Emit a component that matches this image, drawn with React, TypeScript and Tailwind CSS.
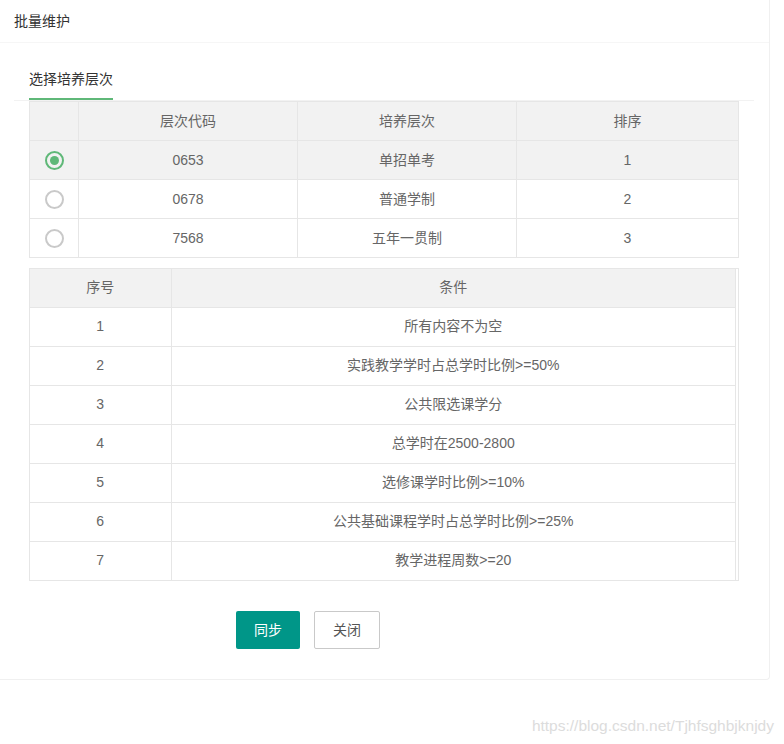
import React from 'react';

const levels = [
    { code: '0653', name: '单招单考', order: 1 },
    { code: '0678', name: '普通学制', order: 2 },
    { code: '7568', name: '五年一贯制', order: 3 },
];

const rules = [
    '所有内容不为空',
    '实践教学学时占总学时比例>=50%',
    '公共限选课学分',
    '总学时在2500-2800',
    '选修课学时比例>=10%',
    '公共基础课程学时占总学时比例>=25%',
    '教学进程周数>=20',
];

const Radio: React.FC<{ checked: boolean }> = ({ checked }) => (
    <span
        className={`mx-auto flex h-[19px] w-[19px] items-center justify-center rounded-full border-2 ${
            checked ? 'border-[#5fb878]' : 'border-[#c9c9c9]'
        }`}
    >
        {checked && <span className="h-[9px] w-[9px] rounded-full bg-[#5fb878]" />}
    </span>
);

export default function App() {
    return (
        <div
            className="min-h-[744px] bg-white text-[14px] text-[#666]"
            style={{ fontFamily: '"Liberation Sans", "Noto Sans CJK SC", sans-serif' }}
        >
            <div className="w-[770px] rounded-br-sm border-r border-b border-[#f0f0f0]">
                <div className="flex h-[43px] items-center border-b border-[#f6f6f6] px-[14px] text-[#333]">
                    批量维护
                </div>

                <div className="px-[14px] pt-[17px] pb-[30px]">
                    <div className="flex h-[41px] w-[740px] border-b border-[#f2f2f2] pl-[15px]">
                        <div className="flex items-center border-b-2 border-[#5fb878] text-[#333]">
                            选择培养层次
                        </div>
                    </div>

                    <div className="pl-[15px]">
                        <table className="w-[710px] table-fixed border-collapse text-center">
                            <colgroup>
                                <col className="w-[49px]" />
                                <col className="w-[219px]" />
                                <col className="w-[219px]" />
                                <col />
                            </colgroup>
                            <thead>
                                <tr className="h-[39px] bg-[#f2f2f2]">
                                    <th className="border border-[#e6e6e6] font-normal"></th>
                                    <th className="border border-[#e6e6e6] font-normal">层次代码</th>
                                    <th className="border border-[#e6e6e6] font-normal">培养层次</th>
                                    <th className="border border-[#e6e6e6] font-normal">排序</th>
                                </tr>
                            </thead>
                            <tbody>
                                {levels.map((l, i) => (
                                    <tr key={l.code} className={`h-[39px] ${i === 0 ? 'bg-[#f2f2f2]' : ''}`}>
                                        <td className="border border-[#e6e6e6]">
                                            <Radio checked={i === 0} />
                                        </td>
                                        <td className="border border-[#e6e6e6]">{l.code}</td>
                                        <td className="border border-[#e6e6e6]">{l.name}</td>
                                        <td className="border border-[#e6e6e6]">{l.order}</td>
                                    </tr>
                                ))}
                            </tbody>
                        </table>

                        <div className="mt-[10px] w-[710px] border border-[#e6e6e6]">
                            <table className="w-[706px] table-fixed border-collapse text-center">
                                <colgroup>
                                    <col className="w-[141px]" />
                                    <col />
                                </colgroup>
                                <thead>
                                    <tr className="h-[38px] bg-[#f2f2f2]">
                                        <th className="border-r border-b border-[#e6e6e6] font-normal">序号</th>
                                        <th className="border-r border-b border-[#e6e6e6] font-normal">条件</th>
                                    </tr>
                                </thead>
                                <tbody>
                                    {rules.map((r, i) => (
                                        <tr key={r} className="h-[39px]">
                                            <td
                                                className={`border-r border-[#e6e6e6] ${
                                                    i < rules.length - 1 ? 'border-b' : ''
                                                }`}
                                            >
                                                {i + 1}
                                            </td>
                                            <td
                                                className={`border-r border-[#e6e6e6] ${
                                                    i < rules.length - 1 ? 'border-b' : ''
                                                }`}
                                            >
                                                {r}
                                            </td>
                                        </tr>
                                    ))}
                                </tbody>
                            </table>
                        </div>

                        <div className="mt-[30px] flex gap-[14px] pl-[207px]">
                            <button className="h-[38px] w-[64px] rounded-[2px] bg-[#009688] text-white">
                                同步
                            </button>
                            <button className="h-[38px] w-[66px] rounded-[2px] border border-[#c9c9c9] bg-white text-[#555]">
                                关闭
                            </button>
                        </div>
                    </div>
                </div>
            </div>

            <div className="mt-[34px] pr-[10px] text-right text-[15.5px] text-[#dcdcdc]">
                https://blog.csdn.net/Tjhfsghbjknjdy
            </div>
        </div>
    );
}
